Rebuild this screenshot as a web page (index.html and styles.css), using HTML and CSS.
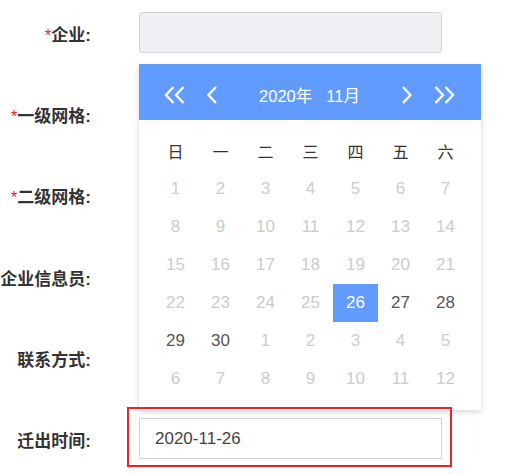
FILE: index.html
```html
<!DOCTYPE html>
<html lang="zh">
<head>
<meta charset="utf-8">
<link rel="stylesheet" href="styles.css">
</head>
<body>
<div class="form">
  <div class="row">
    <div class="label"><span class="req">*</span>企业:</div>
    <div class="input disabled"></div>
  </div>
  <div class="row">
    <div class="label"><span class="req">*</span>一级网格:</div>
    <div class="input"></div>
  </div>
  <div class="row">
    <div class="label"><span class="req">*</span>二级网格:</div>
    <div class="input"></div>
  </div>
  <div class="row">
    <div class="label">企业信息员:</div>
    <div class="input"></div>
  </div>
  <div class="row">
    <div class="label">联系方式:</div>
    <div class="input"></div>
  </div>
  <div class="row last">
    <div class="label">迁出时间:</div>
    <div class="field-wrap">
      <div class="input date">2020-11-26</div>
      <div class="highlight"></div>
    </div>
  </div>

  <div class="calendar">
    <div class="cal-head">
      <div class="nav">
        <svg class="dbl" width="22" height="18" viewBox="0 0 22 18"><polyline points="9.5,1 2,9 9.5,17"/><polyline points="19.5,1 12,9 19.5,17"/></svg>
        <svg class="sgl" width="12" height="18" viewBox="0 0 12 18"><polyline points="10,1 2.5,9 10,17"/></svg>
      </div>
      <div class="title"><span>2020年</span><span class="month">11月</span></div>
      <div class="nav">
        <svg class="sgl" width="12" height="18" viewBox="0 0 12 18"><polyline points="2,1 9.5,9 2,17"/></svg>
        <svg class="dbl" width="22" height="18" viewBox="0 0 22 18"><polyline points="2.5,1 10,9 2.5,17"/><polyline points="12.5,1 20,9 12.5,17"/></svg>
      </div>
    </div>
    <div class="cal-body">
      <div class="wk">日</div><div class="wk">一</div><div class="wk">二</div><div class="wk">三</div><div class="wk">四</div><div class="wk">五</div><div class="wk">六</div>
      <div class="d off">1</div><div class="d off">2</div><div class="d off">3</div><div class="d off">4</div><div class="d off">5</div><div class="d off">6</div><div class="d off">7</div>
      <div class="d off">8</div><div class="d off">9</div><div class="d off">10</div><div class="d off">11</div><div class="d off">12</div><div class="d off">13</div><div class="d off">14</div>
      <div class="d off">15</div><div class="d off">16</div><div class="d off">17</div><div class="d off">18</div><div class="d off">19</div><div class="d off">20</div><div class="d off">21</div>
      <div class="d off">22</div><div class="d off">23</div><div class="d off">24</div><div class="d off">25</div><div class="d sel">26</div><div class="d">27</div><div class="d">28</div>
      <div class="d">29</div><div class="d">30</div><div class="d off">1</div><div class="d off">2</div><div class="d off">3</div><div class="d off">4</div><div class="d off">5</div>
      <div class="d off">6</div><div class="d off">7</div><div class="d off">8</div><div class="d off">9</div><div class="d off">10</div><div class="d off">11</div><div class="d off">12</div>
    </div>
  </div>
</div>
</body>
</html>
```

FILE: styles.css
```css
html, body {
  margin: 0;
  padding: 0;
  background: #ffffff;
  font-family: "Liberation Sans", "Noto Sans CJK SC", sans-serif;
}

body {
  height: 475px;
  overflow: hidden;
}

.form {
  position: relative;
  padding-top: 12px;
}

.row {
  display: flex;
  align-items: flex-start;
  height: 41px;
  margin-bottom: 40.2px;
}

.row.last {
  margin-bottom: 0;
}

.label {
  width: 91px;
  flex: none;
  text-align: right;
  font-size: 17px;
  font-weight: bold;
  color: #333333;
  line-height: 41px;
  padding-top: 3px;
  white-space: nowrap;
}

.req {
  color: #f02020;
  font-weight: normal;
  font-size: 17px;
}

.input {
  box-sizing: border-box;
  margin-left: 48px;
  width: 303px;
  height: 41px;
  border: 1px solid #d3d4dc;
  border-radius: 3px;
  background: #ffffff;
}

.input.disabled {
  background: #efeff4;
}

.field-wrap {
  position: relative;
}

.input.date {
  border-radius: 0;
  border-color: #d0d4dc;
  padding-left: 15px;
  font-size: 17px;
  line-height: 39px;
  color: #444444;
}

.highlight {
  position: absolute;
  left: 36px;
  top: -11px;
  width: 321px;
  height: 56px;
  border: 2px solid #e8232b;
  z-index: 3;
}

.calendar {
  position: absolute;
  left: 139px;
  top: 64px;
  width: 342px;
  height: 346px;
  background: #ffffff;
  box-shadow: 0 2px 6px rgba(0, 0, 0, 0.16);
  z-index: 2;
}

.cal-head {
  height: 56px;
  background: #619bfe;
  display: flex;
  align-items: center;
  padding: 6px 26px 0 25px;
  box-sizing: border-box;
  color: #ffffff;
}

.nav {
  display: flex;
  align-items: center;
  gap: 20px;
}

.nav svg {
  display: block;
  fill: none;
  stroke: #ffffff;
  stroke-width: 2.3;
}

.title {
  flex: 1;
  text-align: center;
  font-size: 16.5px;
  white-space: nowrap;
}

.title .month {
  margin-left: 14px;
}

.cal-body {
  display: grid;
  grid-template-columns: repeat(7, 45px);
  grid-auto-rows: 38px;
  padding: 12px 13px 12px 14px;
}

.wk, .d {
  display: flex;
  align-items: center;
  justify-content: center;
}

.wk {
  font-size: 16px;
  color: #333333;
}

.d {
  font-size: 17px;
  color: #555555;
}

.d.off {
  color: #cccccc;
}

.d.sel {
  background: #619bfe;
  color: #ffffff;
}
```
